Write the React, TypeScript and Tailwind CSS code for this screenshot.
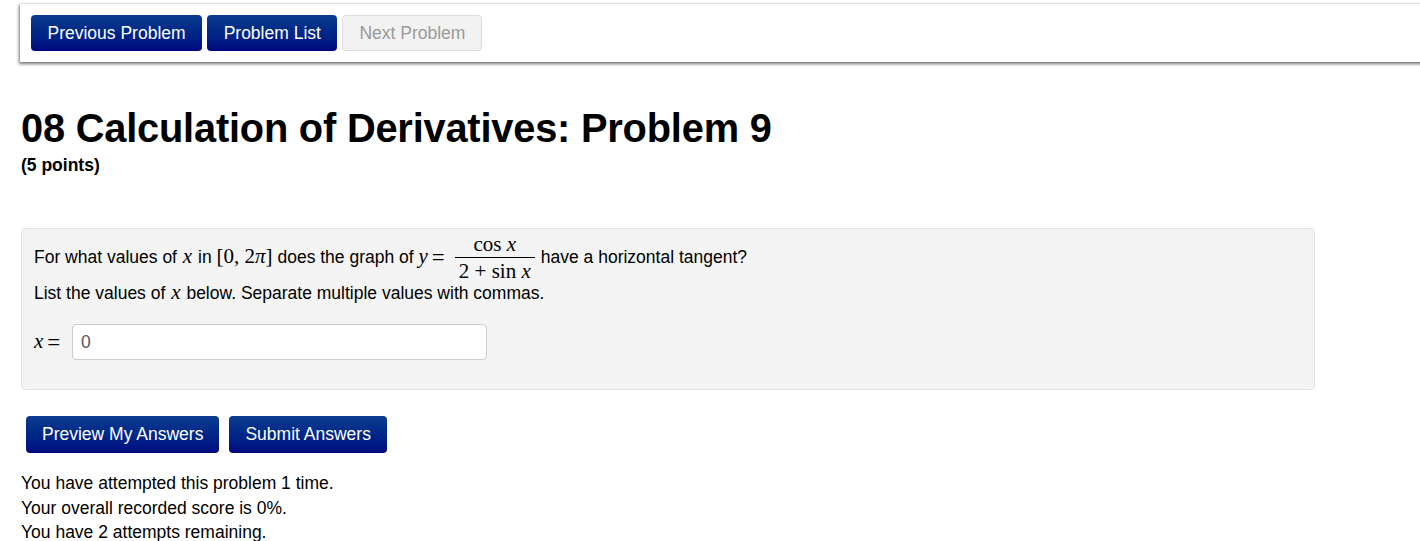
import React from 'react';

const sans = "font-['Liberation_Sans',Arial,sans-serif]";
const serif = "font-['Liberation_Serif','DejaVu_Serif',serif]";

function NavButton({ children, disabled }: { children: React.ReactNode; disabled?: boolean }) {
  if (disabled) {
    return (
      <button
        disabled
        className="h-[36px] px-[16px] rounded-[4px] border border-[#dcdcdc] bg-[#f2f2f2] text-[#9a9a9a] text-[17.5px]"
      >
        {children}
      </button>
    );
  }
  return (
    <button className="h-[36px] px-[16.5px] rounded-[4px] bg-linear-to-b from-[#0d3b8e] to-[#000780] text-white text-[17.5px]">
      {children}
    </button>
  );
}

function MathX() {
  return <span className={`${serif} italic text-[21px] px-[1px]`}>x</span>;
}

function Eq() {
  return <span className={`${serif} text-[23px] leading-none mx-[4px]`}>=</span>;
}

function Fraction() {
  return (
    <span className={`${serif} inline-flex flex-col items-center mx-[6px] text-[21px] leading-[22px]`}>
      <span className="px-[6px] pb-[2px]">
        cos <i>x</i>
      </span>
      <span className="w-full border-t-[1.5px] border-black" />
      <span className="px-[4px] pt-[2px]">
        2 + sin <i>x</i>
      </span>
    </span>
  );
}

export default function App() {
  return (
    <div className={`${sans} bg-white text-black w-[1420px] h-[541px] overflow-hidden`}>
      <div className="pt-[3px] pl-[20px]">
        <div className="w-[1420px] flex gap-[5px] p-[11px] bg-white border-t border-[#e4e4e4] shadow-[-1px_2px_3px_rgba(0,0,0,0.55)]">
          <NavButton>Previous Problem</NavButton>
          <NavButton>Problem List</NavButton>
          <NavButton disabled>Next Problem</NavButton>
        </div>
      </div>

      <div className="pl-[21px]">
        <h1 className="mt-[44px] text-[39.8px] leading-[44px] font-bold tracking-[-0.2px]">
          08 Calculation of Derivatives: Problem 9
        </h1>
        <div className="mt-[4px] text-[17.5px] leading-[22px] font-bold">(5 points)</div>

        <div className="mt-[52px] w-[1294px] rounded-[4px] border border-[#e3e3e3] bg-[#f4f4f4] pt-[5px] px-[12px] pb-[29px] text-[17.5px]">
          <div className="flex items-center h-[46px]">
            <span>For what values of&nbsp;</span>
            <MathX />
            <span>&nbsp;in&nbsp;</span>
            <span className={`${serif} text-[21px]`}>[0, 2<i>π</i>]</span>
            <span>&nbsp;does the graph of&nbsp;</span>
            <span className={`${serif} italic text-[21px]`}>y</span>
            <Eq />
            <Fraction />
            <span>have a horizontal tangent?</span>
          </div>
          <div className="leading-[24px]">
            List the values of <MathX /> below. Separate multiple values with commas.
          </div>
          <div className="mt-[19px] flex items-center">
            <span className="w-[38px] flex items-center">
              <span className={`${serif} italic text-[21px]`}>x</span>
              <Eq />
            </span>
            <input
              readOnly
              value="0"
              className="h-[36px] w-[415px] rounded-[4px] border border-[#cccccc] bg-white px-[8px] text-[17.5px] text-[#555] outline-none"
            />
          </div>
        </div>

        <div className="mt-[26px] ml-[5px] flex gap-[10px]">
          <button className="h-[37px] px-[16px] rounded-[4px] bg-linear-to-b from-[#0d3b8e] to-[#000780] text-white text-[17.5px]">
            Preview My Answers
          </button>
          <button className="h-[37px] px-[16px] rounded-[4px] bg-linear-to-b from-[#0d3b8e] to-[#000780] text-white text-[17.5px]">
            Submit Answers
          </button>
        </div>

        <div className="mt-[18px] text-[17.5px] leading-[24.5px]">
          <p>You have attempted this problem 1 time.</p>
          <p>Your overall recorded score is 0%.</p>
          <p>You have 2 attempts remaining.</p>
        </div>
      </div>
    </div>
  );
}
